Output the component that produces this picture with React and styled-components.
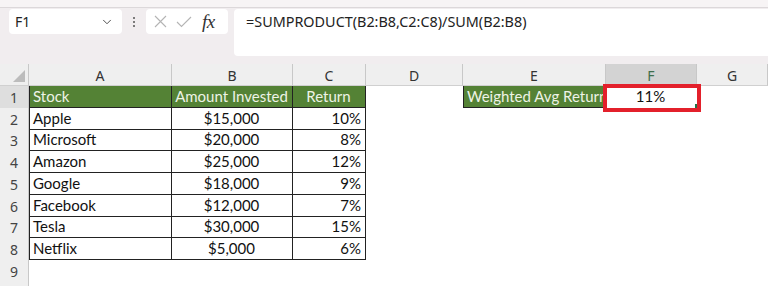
import React from "react";
import styled, { createGlobalStyle } from "styled-components";
import { ChevronDown } from "lucide-react";

const Global = createGlobalStyle`
  html, body { margin: 0; padding: 0; background: #fff; }
  body { width: 768px; height: 286px; overflow: hidden; }
`;

const Page = styled.div`
  width: 768px;
  height: 286px;
  overflow: hidden;
  background: #fff;
`;

const TopStrip = styled.div`
  height: 7px;
  background: #f7f4f5;
  border-bottom: 1px solid #dcd8da;
`;

const Toolbar = styled.div`
  display: flex;
  align-items: flex-start;
  height: 55px;
  padding: 1px 0 0 9px;
  box-sizing: border-box;
  background: #f1edef;
  font-family: "Noto Sans", "Open Sans", sans-serif;
  color: #222;
`;

const NameBox = styled.div`
  display: flex;
  align-items: center;
  justify-content: space-between;
  width: 113px;
  height: 25px;
  padding: 0 8px 0 6px;
  box-sizing: border-box;
  background: #fff;
  border-radius: 4px;
  font-size: 14px;
`;

const Dots = styled.div`
  width: 24px;
  height: 25px;
  display: flex;
  flex-direction: column;
  align-items: center;
  justify-content: center;
  gap: 2px;
  span {
    width: 2px;
    height: 2px;
    background: #555;
    border-radius: 1px;
  }
`;

const FxBox = styled.div`
  display: flex;
  align-items: center;
  width: 82px;
  height: 25px;
  padding: 0 0 0 8px;
  box-sizing: border-box;
  background: #fff;
  border-radius: 4px;
  gap: 9px;
`;

const Fx = styled.span`
  font-family: "Liberation Serif", serif;
  font-style: italic;
  font-size: 19px;
  color: #333;
  margin-left: 1px;
  letter-spacing: -0.5px;
`;

const FormulaBox = styled.div`
  flex: 1;
  height: 47px;
  margin-left: 6px;
  padding: 3px 12px;
  box-sizing: border-box;
  background: #fff;
  border-radius: 4px 0 0 4px;
  font-size: 14.4px;
  line-height: 19px;
`;

const Gap = styled.div`
  height: 1px;
  background: #f1edef;
`;

const Sheet = styled.div`
  display: grid;
  grid-template-columns: 29px 143px 121px 73px 97px 143px 91px 1fr;
  grid-template-rows: 22px repeat(10, 21.75px);
  font-family: Lato, "Liberation Sans", sans-serif;
  font-size: 15px;
`;

const Corner = styled.div`
  position: relative;
  background: #efefef;
  border-right: 1px solid #c8c8c8;
  border-bottom: 1px solid #d0d0d0;
  &::after {
    content: "";
    position: absolute;
    right: 3px;
    bottom: 3px;
    border-style: solid;
    border-width: 0 0 12px 12px;
    border-color: transparent transparent #bcbcbc transparent;
  }
`;

const ColHead = styled.div`
  display: flex;
  align-items: center;
  justify-content: center;
  background: ${(p) => (p.$on ? "#d3d3d3" : "#efefef")};
  color: ${(p) => (p.$on ? "#3e6e4c" : "#333")};
  border-right: 1px solid #c8c8c8;
  border-bottom: 1px solid #d0d0d0;
  font-family: "Noto Sans", "Open Sans", sans-serif;
  font-size: 14px;
  padding-top: 1px;
`;

const RowHead = styled.div`
  display: flex;
  align-items: flex-end;
  justify-content: center;
  padding-bottom: 1px;
  box-sizing: border-box;
  background: ${(p) => (p.$on ? "#dedede" : "#efefef")};
  color: #444;
  border-right: 1px solid #c8c8c8;
  font-family: "Noto Sans", "Open Sans", sans-serif;
  font-size: 14px;
`;

const Cell = styled.div`
  position: relative;
  display: flex;
  align-items: flex-end;
  justify-content: ${(p) =>
    p.$align === "right" ? "flex-end" : p.$align === "center" ? "center" : "flex-start"};
  padding: 0 4px 2px 3px;
  box-sizing: border-box;
  white-space: nowrap;
  background: ${(p) => (p.$fill ? "#548235" : "transparent")};
  color: ${(p) => (p.$fill ? "#eef3e6" : "#111")};
  border-right: 1px solid ${(p) => (p.$box ? "#222" : "transparent")};
  border-bottom: 1px solid ${(p) => (p.$box ? "#222" : "transparent")};
  border-left: ${(p) => (p.$left ? "1px solid #222" : "none")};
  z-index: ${(p) => (p.$sel ? 2 : "auto")};
`;

const Selection = styled.div`
  position: absolute;
  top: -2px;
  left: -3px;
  right: -5px;
  bottom: -5px;
  border: 4px solid #e3202b;
  pointer-events: none;
  &::after {
    content: "";
    position: absolute;
    right: 0;
    bottom: 0;
    width: 2px;
    height: 4px;
    background: #217346;
  }
`;

const cols = ["A", "B", "C", "D", "E", "F", "G"];

const stocks = [
  ["Apple", "$15,000", "10%"],
  ["Microsoft", "$20,000", "8%"],
  ["Amazon", "$25,000", "12%"],
  ["Google", "$18,000", "9%"],
  ["Facebook", "$12,000", "7%"],
  ["Tesla", "$30,000", "15%"],
  ["Netflix", "$5,000", "6%"],
];

const App = () => {
  const rows = [];
  for (let r = 1; r <= 10; r++) {
    // row 10 is only a sliver at the bottom edge, its number falls outside the window
    rows.push(<RowHead key={"h" + r} $on={r === 1}>{r < 10 ? r : ""}</RowHead>);
    if (r === 1) {
      rows.push(<Cell key="a1" $fill $box $left>Stock</Cell>);
      rows.push(<Cell key="b1" $fill $box $align="center">Amount Invested</Cell>);
      rows.push(<Cell key="c1" $fill $box $align="center">Return</Cell>);
      rows.push(<Cell key="d1" />);
      rows.push(<Cell key="e1" $fill $box $left>Weighted Avg Return</Cell>);
      rows.push(
        <Cell key="f1" $align="center" $sel>
          11%
          <Selection />
        </Cell>
      );
      rows.push(<Cell key="g1" />);
    } else if (r <= 8) {
      const [name, amount, ret] = stocks[r - 2];
      rows.push(<Cell key={"a" + r} $box $left>{name}</Cell>);
      rows.push(<Cell key={"b" + r} $box $align="center">{amount}</Cell>);
      rows.push(<Cell key={"c" + r} $box $align="right">{ret}</Cell>);
      for (let c = 3; c < 7; c++) rows.push(<Cell key={cols[c] + r} />);
    } else {
      for (let c = 0; c < 7; c++) rows.push(<Cell key={cols[c] + r} />);
    }
  }

  return (
    <Page>
      <Global />
      <TopStrip />
      <Toolbar>
        <NameBox>
          F1
          <ChevronDown size={14} color="#444" strokeWidth={1.6} />
        </NameBox>
        <Dots>
          <span />
          <span />
          <span />
        </Dots>
        <FxBox>
          <svg width="13" height="13" viewBox="0 0 13 13">
            <path d="M1 1 L12 12 M12 1 L1 12" stroke="#b4b4b4" strokeWidth="1.1" fill="none" />
          </svg>
          <svg width="16" height="12" viewBox="0 0 16 12">
            <path d="M1 6 L5.5 10.5 L15 1" stroke="#b4b4b4" strokeWidth="1.1" fill="none" />
          </svg>
          <Fx>fx</Fx>
        </FxBox>
        <FormulaBox>=SUMPRODUCT(B2:B8,C2:C8)/SUM(B2:B8)</FormulaBox>
      </Toolbar>
      <Gap />
      <Sheet>
        <Corner />
        {cols.map((c) => (
          <ColHead key={c} $on={c === "F"}>{c}</ColHead>
        ))}
        {rows}
      </Sheet>
    </Page>
  );
};

export default App;
